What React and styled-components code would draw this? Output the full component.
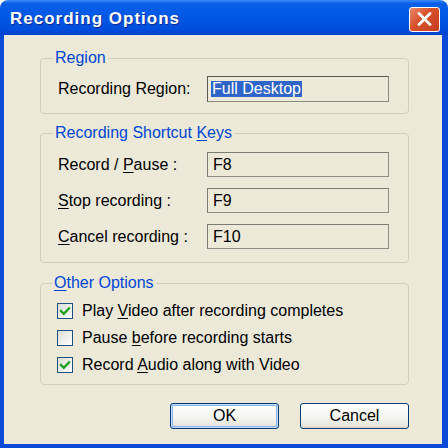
import React from "react";
import styled, { createGlobalStyle } from "styled-components";

const Global = createGlobalStyle`
  html, body {
    margin: 0;
    padding: 0;
    background: #ffffff;
  }
  * {
    box-sizing: border-box;
  }
`;

const Window = styled.div`
  width: 448px;
  height: 448px;
  display: flex;
  flex-direction: column;
  font-family: "Liberation Sans", Arial, sans-serif;
  font-size: 16px;
  color: #000;
`;

const TitleBar = styled.div`
  height: 35px;
  flex: none;
  display: flex;
  align-items: center;
  justify-content: space-between;
  padding: 3px 8px 0 10px;
  border-radius: 8px 8px 0 0;
  background: linear-gradient(
    180deg,
    #3d8cf7 0%,
    #0a5fe9 10%,
    #0058e6 45%,
    #004ddb 85%,
    #0042cc 100%
  );
`;

const Title = styled.span`
  font-size: 17px;
  font-weight: bold;
  letter-spacing: 1px;
  color: #fff;
  text-shadow: 1px 1px 0 #0b2a9a;
`;

const CloseButton = styled.div`
  width: 31px;
  height: 25px;
  border: 1px solid #fff;
  border-radius: 3px;
  display: flex;
  align-items: center;
  justify-content: center;
  background: linear-gradient(135deg, #e98a6c 0%, #d9532f 40%, #c43d1b 100%);
`;

const Body = styled.div`
  flex: 1;
  display: flex;
  flex-direction: column;
  background: #ece9d8;
  border-left: 4px solid #0b4ad8;
  border-right: 6px solid #0b4ad8;
  border-bottom: 4px solid #0b4ad8;
  padding: 14px 33px 15px 36px;
`;

const Group = styled.fieldset`
  margin: 0 0 ${(p) => p.$gap || 0}px 0;
  border: 1px solid #d0d0bf;
  border-radius: 4px;
  padding: ${(p) => p.$pad};
  min-width: 0;
`;

const Legend = styled.legend`
  font-size: 16px;
  line-height: 18px;
  color: #0046d5;
  padding: 0 2px;
  margin-left: -5px;
`;

const KeyGrid = styled.div`
  display: grid;
  grid-template-columns: 149px 182px;
  row-gap: ${(p) => p.$gap || 0}px;
  align-items: center;
`;

const Label = styled.span`
  white-space: nowrap;
`;

const Field = styled.div`
  height: ${(p) => p.$h}px;
  display: flex;
  align-items: center;
  padding-left: ${(p) => (p.$focused ? 3 : 5)}px;
  background: #ece9d8;
  border: 1px solid ${(p) => (p.$focused ? "#8a8a82" : "#8f8f88")};
  border-top-color: ${(p) => (p.$focused ? "#5a5a55" : "#7c7c76")};
  border-left-color: ${(p) => (p.$focused ? "#5a5a55" : "#7c7c76")};
`;

const Selection = styled.span`
  background: #2f64c8;
  color: #fff;
  line-height: 16px;
  padding: 0 1px;
`;

const U = styled.span`
  text-decoration: underline;
  text-underline-offset: 2px;
`;

const CheckRow = styled.div`
  height: 27px;
  display: flex;
  align-items: center;
  gap: 9px;
`;

const Box = styled.span`
  width: 16px;
  height: 16px;
  flex: none;
  border: 1px solid #1c5180;
  background: linear-gradient(135deg, #dcdcd5 0%, #eeeeea 50%, #ffffff 100%);
  display: flex;
  align-items: center;
  justify-content: center;
`;

const Buttons = styled.div`
  margin-top: 18px;
  display: flex;
  justify-content: flex-end;
  gap: 21px;
`;

const Button = styled.div`
  width: 109px;
  height: 26px;
  display: flex;
  align-items: center;
  justify-content: center;
  border: 1px solid #003c74;
  border-radius: 3px;
  background: linear-gradient(180deg, #ffffff 0%, #f4f4f0 60%, #e3e0d6 100%);
  box-shadow: ${(p) =>
    p.$default
      ? "inset 0 0 0 1px #c6dcfc, inset 0 0 0 2px #8db2ef"
      : "inset 0 -1px 0 #d6d0c5"};
`;

const Check = () => (
  <svg width="12" height="12" viewBox="0 0 12 12">
    <path
      d="M2 6 L4.8 8.8 L10 3.4"
      fill="none"
      stroke="#21a121"
      strokeWidth="2.4"
      strokeLinecap="square"
    />
  </svg>
);

const CheckOption = ({ checked, children }) => (
  <CheckRow>
    <Box>{checked && <Check />}</Box>
    <span>{children}</span>
  </CheckRow>
);

export default function App() {
  return (
    <Window>
      <Global />
      <TitleBar>
        <Title>Recording Options</Title>
        <CloseButton>
          <svg width="15" height="14" viewBox="0 0 15 14">
            <path
              d="M2 1.5 L13 12.5 M13 1.5 L2 12.5"
              stroke="#fff"
              strokeWidth="2.8"
              strokeLinecap="round"
            />
          </svg>
        </CloseButton>
      </TitleBar>
      <Body>
        <Group $pad="9px 19px 11px 17px" $gap={10}>
          <Legend>Region</Legend>
          <KeyGrid>
            <Label>Recording Region:</Label>
            <Field $h={26} $focused>
              <Selection>Full Desktop</Selection>
            </Field>
          </KeyGrid>
        </Group>

        <Group $pad="10px 19px 13px 17px" $gap={11}>
          <Legend>
            Recording Shortcut <U>K</U>eys
          </Legend>
          <KeyGrid $gap={11}>
            <Label>
              Record / <U>P</U>ause :
            </Label>
            <Field $h={25}>F8</Field>
            <Label>
              <U>S</U>top recording :
            </Label>
            <Field $h={25}>F9</Field>
            <Label>
              <U>C</U>ancel recording :
            </Label>
            <Field $h={25}>F10</Field>
          </KeyGrid>
        </Group>

        <Group $pad="5px 19px 6px 16px">
          <Legend>
            <U>O</U>ther Options
          </Legend>
          <CheckOption checked>
            Play <U>V</U>ideo after recording completes
          </CheckOption>
          <CheckOption>
            Pause <U>b</U>efore recording starts
          </CheckOption>
          <CheckOption checked>
            Record <U>A</U>udio along with Video
          </CheckOption>
        </Group>

        <Buttons>
          <Button $default>OK</Button>
          <Button>Cancel</Button>
        </Buttons>
      </Body>
    </Window>
  );
}
